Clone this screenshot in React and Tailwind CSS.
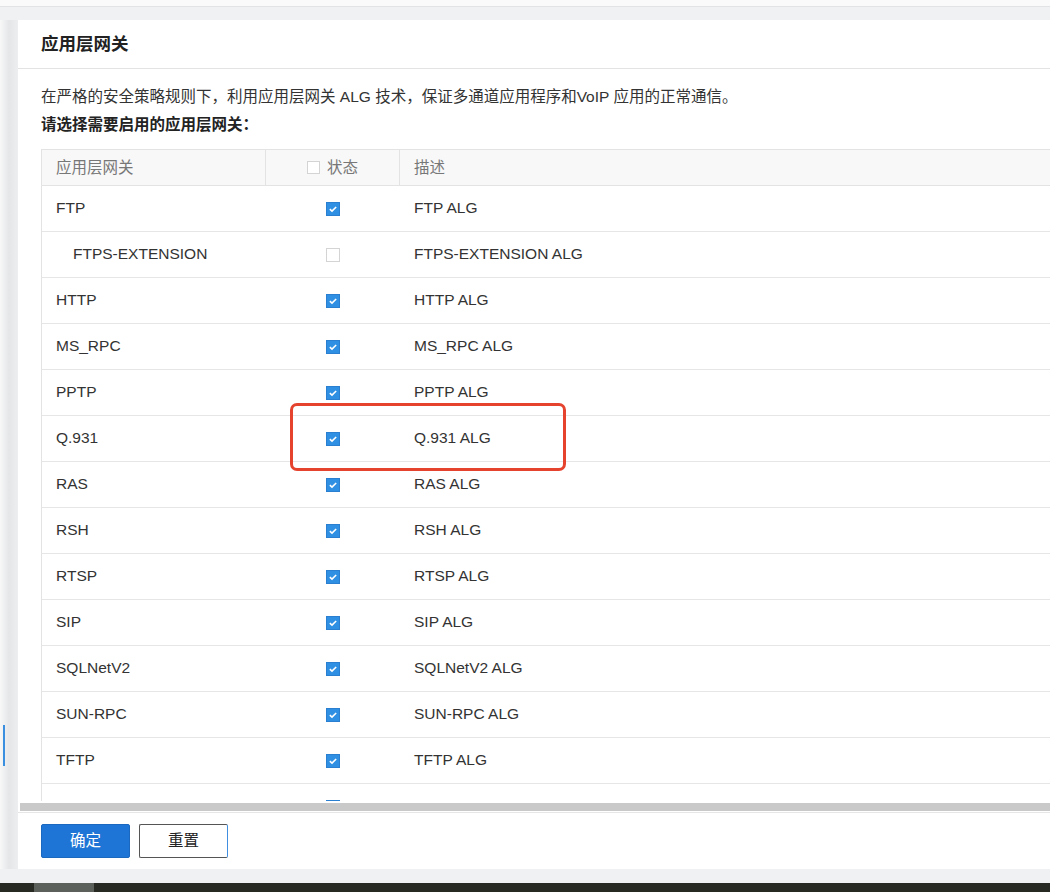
import React from "react";

const rows = [
  { name: "FTP", on: true },
  { name: "FTPS-EXTENSION", on: false, sub: true },
  { name: "HTTP", on: true },
  { name: "MS_RPC", on: true },
  { name: "PPTP", on: true },
  { name: "Q.931", on: true },
  { name: "RAS", on: true },
  { name: "RSH", on: true },
  { name: "RTSP", on: true },
  { name: "SIP", on: true },
  { name: "SQLNetV2", on: true },
  { name: "SUN-RPC", on: true },
  { name: "TFTP", on: true },
  { name: "TNS", on: true },
];

const Box = ({ on, size = "w-[14px] h-[14px]" }) =>
  on ? (
    <span className={`${size} inline-flex items-center justify-center bg-[#2f8fe3] border border-[#2a7fd0]`}>
      <svg viewBox="0 0 12 12" className="w-[10px] h-[10px]">
        <path d="M2.2 6.2 L4.8 8.6 L9.8 3.6" fill="none" stroke="#fff" strokeWidth="1.9" />
      </svg>
    </span>
  ) : (
    <span className={`${size} inline-block bg-white border border-[#d4d4d4]`} />
  );

const App = () => {
  return (
    <div
      className="relative w-[1050px] h-[892px] overflow-hidden bg-[#eff1f3] flex flex-col text-[#333]"
      style={{ fontFamily: '"Liberation Sans", Arial, "Noto Sans CJK SC", sans-serif' }}
    >
      <div className="h-[7px] shrink-0 bg-[#fafafa] border-b border-[#e2e3e5]" />
      <div className="h-[13px] shrink-0" />

      <div className="flex h-[849px] shrink-0">
        <div className="w-[18px] shrink-0 bg-gradient-to-r from-[#f8f8f8] via-[#e4e6e8] to-[#eceef0]" />
        <div className="flex-1 bg-white flex flex-col overflow-hidden">
          <div className="h-[49px] shrink-0 px-[23px] flex items-center border-b border-[#e3e3e3] font-bold text-[17.5px] text-[#222]">
            应用层网关
          </div>

          <div className="h-[732px] shrink-0 overflow-hidden px-[23px] pt-[14px]">
            <p className="text-[15.5px] leading-[28px] whitespace-nowrap">
              在严格的安全策略规则下，利用应用层网关 ALG 技术，保证多通道应用程序和VoIP 应用的正常通信。
            </p>
            <p className="text-[15.5px] leading-[28px] font-bold text-[#222]">请选择需要启用的应用层网关：</p>

            <div className="mt-[10px] w-[1100px] border-l border-t border-[#e3e3e3]">
              <div className="flex h-[36px] bg-[#f8f8f8] border-b border-[#e3e3e3] text-[15.5px] text-[#777]">
                <div className="w-[224px] flex items-center pl-[14px] border-r border-[#e3e3e3]">应用层网关</div>
                <div className="w-[134px] flex items-center justify-center gap-[7px] border-r border-[#e3e3e3]">
                  <Box on={false} size="w-[13px] h-[13px]" />
                  <span>状态</span>
                </div>
                <div className="flex-1 flex items-center pl-[14px]">描述</div>
              </div>
              {rows.map((r) => (
                <div key={r.name} className="flex h-[46px] border-b border-[#e6e6e6] text-[15.5px]">
                  <div className={`w-[224px] flex items-center pb-[2px] ${r.sub ? "pl-[31px]" : "pl-[14px]"}`}>{r.name}</div>
                  <div className="w-[134px] flex items-center justify-center">
                    <Box on={r.on} />
                  </div>
                  <div className="flex-1 flex items-center pb-[2px] pl-[14px]">{r.name} ALG</div>
                </div>
              ))}
            </div>
          </div>

          <div className="h-[2px] shrink-0" />
          <div className="h-[8px] shrink-0 ml-[2px] bg-[#c9c9c9]" />
          <div className="h-[1px] shrink-0" />
          <div className="h-[1px] shrink-0 bg-[#e6e6e6]" />

          <div className="flex gap-[9px] px-[23px] pt-[11px]">
            <button className="w-[89px] h-[34px] rounded-[2px] bg-[#1f75d6] text-white text-[15.5px] border border-[#1b68c0]">
              确定
            </button>
            <button className="w-[89px] h-[34px] rounded-[2px] bg-white text-[#222] text-[15.5px] border border-[#555] border-r-[#3f8ee0]">
              重置
            </button>
          </div>
        </div>
      </div>

      <div className="h-[14px] shrink-0" />
      <div className="flex-1 bg-[#262a23] flex">
        <div className="ml-[34px] w-[60px] bg-[#5c605a]" />
      </div>

      <div className="absolute left-[3px] top-[725px] w-[2px] h-[41px] bg-[#3b8fe0]" />
      <div className="absolute left-[290px] top-[403px] w-[276px] h-[68px] border-[3px] border-[#e5432e] rounded-[7px]" />
    </div>
  );
};

export default App;
